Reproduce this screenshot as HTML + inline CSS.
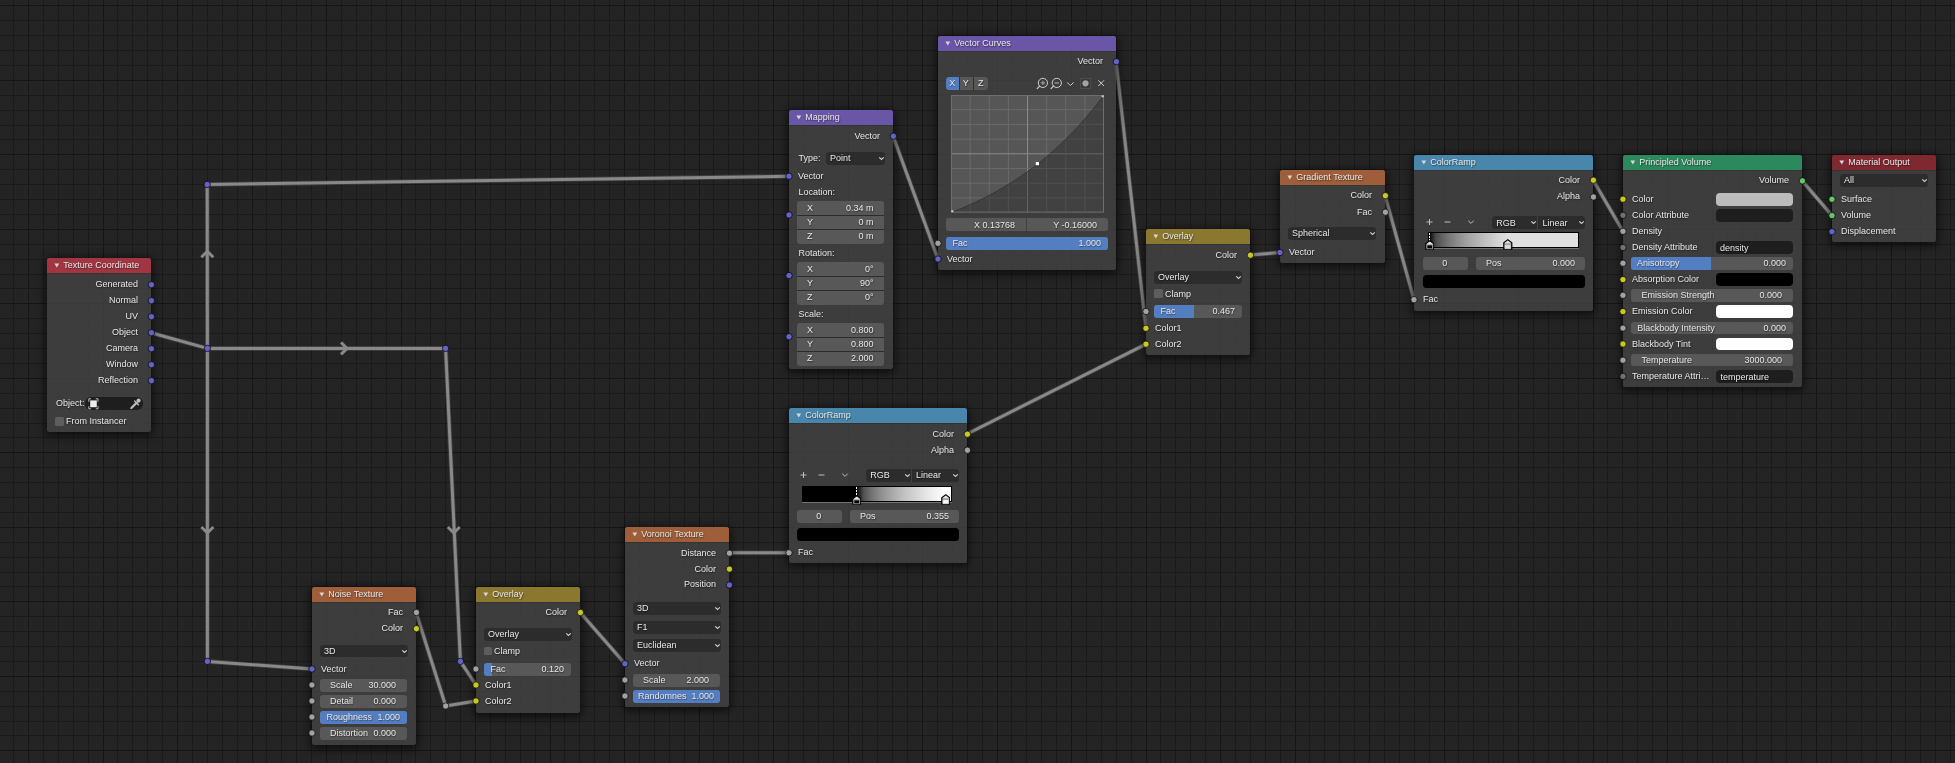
<!DOCTYPE html>
<html><head><meta charset="utf-8"><style>
html,body{margin:0;padding:0;}
body{width:1955px;height:763px;overflow:hidden;background:#242424;position:relative;font-family:"Liberation Sans", sans-serif;}
.r{position:absolute;}
#nodes{will-change:transform;}
.t{position:absolute;white-space:nowrap;line-height:10px;}
</style></head><body>
<svg class="r" style="left:0;top:0" width="1955" height="763"><rect x="-2" y="0" width="1" height="763" fill="#1a1a1a"/><rect x="13" y="0" width="1" height="763" fill="#1a1a1a"/><rect x="28" y="0" width="1" height="763" fill="#151515"/><rect x="43" y="0" width="1" height="763" fill="#1a1a1a"/><rect x="58" y="0" width="1" height="763" fill="#1a1a1a"/><rect x="73" y="0" width="1" height="763" fill="#1a1a1a"/><rect x="88" y="0" width="1" height="763" fill="#1a1a1a"/><rect x="103" y="0" width="1" height="763" fill="#151515"/><rect x="117" y="0" width="1" height="763" fill="#1a1a1a"/><rect x="132" y="0" width="1" height="763" fill="#1a1a1a"/><rect x="147" y="0" width="1" height="763" fill="#1a1a1a"/><rect x="162" y="0" width="1" height="763" fill="#1a1a1a"/><rect x="177" y="0" width="1" height="763" fill="#151515"/><rect x="192" y="0" width="1" height="763" fill="#1a1a1a"/><rect x="207" y="0" width="1" height="763" fill="#1a1a1a"/><rect x="222" y="0" width="1" height="763" fill="#1a1a1a"/><rect x="237" y="0" width="1" height="763" fill="#1a1a1a"/><rect x="252" y="0" width="1" height="763" fill="#151515"/><rect x="266" y="0" width="1" height="763" fill="#1a1a1a"/><rect x="281" y="0" width="1" height="763" fill="#1a1a1a"/><rect x="296" y="0" width="1" height="763" fill="#1a1a1a"/><rect x="311" y="0" width="1" height="763" fill="#1a1a1a"/><rect x="326" y="0" width="1" height="763" fill="#151515"/><rect x="341" y="0" width="1" height="763" fill="#1a1a1a"/><rect x="356" y="0" width="1" height="763" fill="#1a1a1a"/><rect x="371" y="0" width="1" height="763" fill="#1a1a1a"/><rect x="386" y="0" width="1" height="763" fill="#1a1a1a"/><rect x="401" y="0" width="1" height="763" fill="#151515"/><rect x="415" y="0" width="1" height="763" fill="#1a1a1a"/><rect x="430" y="0" width="1" height="763" fill="#1a1a1a"/><rect x="445" y="0" width="1" height="763" fill="#1a1a1a"/><rect x="460" y="0" width="1" height="763" fill="#1a1a1a"/><rect x="475" y="0" width="1" height="763" fill="#151515"/><rect x="490" y="0" width="1" height="763" fill="#1a1a1a"/><rect x="505" y="0" width="1" height="763" fill="#1a1a1a"/><rect x="520" y="0" width="1" height="763" fill="#1a1a1a"/><rect x="535" y="0" width="1" height="763" fill="#1a1a1a"/><rect x="550" y="0" width="1" height="763" fill="#151515"/><rect x="564" y="0" width="1" height="763" fill="#1a1a1a"/><rect x="579" y="0" width="1" height="763" fill="#1a1a1a"/><rect x="594" y="0" width="1" height="763" fill="#1a1a1a"/><rect x="609" y="0" width="1" height="763" fill="#1a1a1a"/><rect x="624" y="0" width="1" height="763" fill="#151515"/><rect x="639" y="0" width="1" height="763" fill="#1a1a1a"/><rect x="654" y="0" width="1" height="763" fill="#1a1a1a"/><rect x="669" y="0" width="1" height="763" fill="#1a1a1a"/><rect x="684" y="0" width="1" height="763" fill="#1a1a1a"/><rect x="699" y="0" width="1" height="763" fill="#151515"/><rect x="713" y="0" width="1" height="763" fill="#1a1a1a"/><rect x="728" y="0" width="1" height="763" fill="#1a1a1a"/><rect x="743" y="0" width="1" height="763" fill="#1a1a1a"/><rect x="758" y="0" width="1" height="763" fill="#1a1a1a"/><rect x="773" y="0" width="1" height="763" fill="#151515"/><rect x="788" y="0" width="1" height="763" fill="#1a1a1a"/><rect x="803" y="0" width="1" height="763" fill="#1a1a1a"/><rect x="818" y="0" width="1" height="763" fill="#1a1a1a"/><rect x="833" y="0" width="1" height="763" fill="#1a1a1a"/><rect x="848" y="0" width="1" height="763" fill="#151515"/><rect x="862" y="0" width="1" height="763" fill="#1a1a1a"/><rect x="877" y="0" width="1" height="763" fill="#1a1a1a"/><rect x="892" y="0" width="1" height="763" fill="#1a1a1a"/><rect x="907" y="0" width="1" height="763" fill="#1a1a1a"/><rect x="922" y="0" width="1" height="763" fill="#151515"/><rect x="937" y="0" width="1" height="763" fill="#1a1a1a"/><rect x="952" y="0" width="1" height="763" fill="#1a1a1a"/><rect x="967" y="0" width="1" height="763" fill="#1a1a1a"/><rect x="982" y="0" width="1" height="763" fill="#1a1a1a"/><rect x="997" y="0" width="1" height="763" fill="#151515"/><rect x="1011" y="0" width="1" height="763" fill="#1a1a1a"/><rect x="1026" y="0" width="1" height="763" fill="#1a1a1a"/><rect x="1041" y="0" width="1" height="763" fill="#1a1a1a"/><rect x="1056" y="0" width="1" height="763" fill="#1a1a1a"/><rect x="1071" y="0" width="1" height="763" fill="#151515"/><rect x="1086" y="0" width="1" height="763" fill="#1a1a1a"/><rect x="1101" y="0" width="1" height="763" fill="#1a1a1a"/><rect x="1116" y="0" width="1" height="763" fill="#1a1a1a"/><rect x="1131" y="0" width="1" height="763" fill="#1a1a1a"/><rect x="1146" y="0" width="1" height="763" fill="#151515"/><rect x="1160" y="0" width="1" height="763" fill="#1a1a1a"/><rect x="1175" y="0" width="1" height="763" fill="#1a1a1a"/><rect x="1190" y="0" width="1" height="763" fill="#1a1a1a"/><rect x="1205" y="0" width="1" height="763" fill="#1a1a1a"/><rect x="1220" y="0" width="1" height="763" fill="#151515"/><rect x="1235" y="0" width="1" height="763" fill="#1a1a1a"/><rect x="1250" y="0" width="1" height="763" fill="#1a1a1a"/><rect x="1265" y="0" width="1" height="763" fill="#1a1a1a"/><rect x="1280" y="0" width="1" height="763" fill="#1a1a1a"/><rect x="1295" y="0" width="1" height="763" fill="#151515"/><rect x="1309" y="0" width="1" height="763" fill="#1a1a1a"/><rect x="1324" y="0" width="1" height="763" fill="#1a1a1a"/><rect x="1339" y="0" width="1" height="763" fill="#1a1a1a"/><rect x="1354" y="0" width="1" height="763" fill="#1a1a1a"/><rect x="1369" y="0" width="1" height="763" fill="#151515"/><rect x="1384" y="0" width="1" height="763" fill="#1a1a1a"/><rect x="1399" y="0" width="1" height="763" fill="#1a1a1a"/><rect x="1414" y="0" width="1" height="763" fill="#1a1a1a"/><rect x="1429" y="0" width="1" height="763" fill="#1a1a1a"/><rect x="1444" y="0" width="1" height="763" fill="#151515"/><rect x="1458" y="0" width="1" height="763" fill="#1a1a1a"/><rect x="1473" y="0" width="1" height="763" fill="#1a1a1a"/><rect x="1488" y="0" width="1" height="763" fill="#1a1a1a"/><rect x="1503" y="0" width="1" height="763" fill="#1a1a1a"/><rect x="1518" y="0" width="1" height="763" fill="#151515"/><rect x="1533" y="0" width="1" height="763" fill="#1a1a1a"/><rect x="1548" y="0" width="1" height="763" fill="#1a1a1a"/><rect x="1563" y="0" width="1" height="763" fill="#1a1a1a"/><rect x="1578" y="0" width="1" height="763" fill="#1a1a1a"/><rect x="1593" y="0" width="1" height="763" fill="#151515"/><rect x="1607" y="0" width="1" height="763" fill="#1a1a1a"/><rect x="1622" y="0" width="1" height="763" fill="#1a1a1a"/><rect x="1637" y="0" width="1" height="763" fill="#1a1a1a"/><rect x="1652" y="0" width="1" height="763" fill="#1a1a1a"/><rect x="1667" y="0" width="1" height="763" fill="#151515"/><rect x="1682" y="0" width="1" height="763" fill="#1a1a1a"/><rect x="1697" y="0" width="1" height="763" fill="#1a1a1a"/><rect x="1712" y="0" width="1" height="763" fill="#1a1a1a"/><rect x="1727" y="0" width="1" height="763" fill="#1a1a1a"/><rect x="1742" y="0" width="1" height="763" fill="#151515"/><rect x="1756" y="0" width="1" height="763" fill="#1a1a1a"/><rect x="1771" y="0" width="1" height="763" fill="#1a1a1a"/><rect x="1786" y="0" width="1" height="763" fill="#1a1a1a"/><rect x="1801" y="0" width="1" height="763" fill="#1a1a1a"/><rect x="1816" y="0" width="1" height="763" fill="#151515"/><rect x="1831" y="0" width="1" height="763" fill="#1a1a1a"/><rect x="1846" y="0" width="1" height="763" fill="#1a1a1a"/><rect x="1861" y="0" width="1" height="763" fill="#1a1a1a"/><rect x="1876" y="0" width="1" height="763" fill="#1a1a1a"/><rect x="1891" y="0" width="1" height="763" fill="#151515"/><rect x="1905" y="0" width="1" height="763" fill="#1a1a1a"/><rect x="1920" y="0" width="1" height="763" fill="#1a1a1a"/><rect x="1935" y="0" width="1" height="763" fill="#1a1a1a"/><rect x="1950" y="0" width="1" height="763" fill="#1a1a1a"/><rect x="0" y="-24" width="1955" height="1" fill="#1a1a1a"/><rect x="0" y="-10" width="1955" height="1" fill="#1a1a1a"/><rect x="0" y="5" width="1955" height="1" fill="#151515"/><rect x="0" y="20" width="1955" height="1" fill="#1a1a1a"/><rect x="0" y="35" width="1955" height="1" fill="#1a1a1a"/><rect x="0" y="50" width="1955" height="1" fill="#1a1a1a"/><rect x="0" y="65" width="1955" height="1" fill="#1a1a1a"/><rect x="0" y="80" width="1955" height="1" fill="#151515"/><rect x="0" y="95" width="1955" height="1" fill="#1a1a1a"/><rect x="0" y="110" width="1955" height="1" fill="#1a1a1a"/><rect x="0" y="125" width="1955" height="1" fill="#1a1a1a"/><rect x="0" y="139" width="1955" height="1" fill="#1a1a1a"/><rect x="0" y="154" width="1955" height="1" fill="#151515"/><rect x="0" y="169" width="1955" height="1" fill="#1a1a1a"/><rect x="0" y="184" width="1955" height="1" fill="#1a1a1a"/><rect x="0" y="199" width="1955" height="1" fill="#1a1a1a"/><rect x="0" y="214" width="1955" height="1" fill="#1a1a1a"/><rect x="0" y="229" width="1955" height="1" fill="#151515"/><rect x="0" y="244" width="1955" height="1" fill="#1a1a1a"/><rect x="0" y="259" width="1955" height="1" fill="#1a1a1a"/><rect x="0" y="274" width="1955" height="1" fill="#1a1a1a"/><rect x="0" y="288" width="1955" height="1" fill="#1a1a1a"/><rect x="0" y="303" width="1955" height="1" fill="#151515"/><rect x="0" y="318" width="1955" height="1" fill="#1a1a1a"/><rect x="0" y="333" width="1955" height="1" fill="#1a1a1a"/><rect x="0" y="348" width="1955" height="1" fill="#1a1a1a"/><rect x="0" y="363" width="1955" height="1" fill="#1a1a1a"/><rect x="0" y="378" width="1955" height="1" fill="#151515"/><rect x="0" y="393" width="1955" height="1" fill="#1a1a1a"/><rect x="0" y="408" width="1955" height="1" fill="#1a1a1a"/><rect x="0" y="423" width="1955" height="1" fill="#1a1a1a"/><rect x="0" y="437" width="1955" height="1" fill="#1a1a1a"/><rect x="0" y="452" width="1955" height="1" fill="#151515"/><rect x="0" y="467" width="1955" height="1" fill="#1a1a1a"/><rect x="0" y="482" width="1955" height="1" fill="#1a1a1a"/><rect x="0" y="497" width="1955" height="1" fill="#1a1a1a"/><rect x="0" y="512" width="1955" height="1" fill="#1a1a1a"/><rect x="0" y="527" width="1955" height="1" fill="#151515"/><rect x="0" y="542" width="1955" height="1" fill="#1a1a1a"/><rect x="0" y="557" width="1955" height="1" fill="#1a1a1a"/><rect x="0" y="572" width="1955" height="1" fill="#1a1a1a"/><rect x="0" y="586" width="1955" height="1" fill="#1a1a1a"/><rect x="0" y="601" width="1955" height="1" fill="#151515"/><rect x="0" y="616" width="1955" height="1" fill="#1a1a1a"/><rect x="0" y="631" width="1955" height="1" fill="#1a1a1a"/><rect x="0" y="646" width="1955" height="1" fill="#1a1a1a"/><rect x="0" y="661" width="1955" height="1" fill="#1a1a1a"/><rect x="0" y="676" width="1955" height="1" fill="#151515"/><rect x="0" y="691" width="1955" height="1" fill="#1a1a1a"/><rect x="0" y="706" width="1955" height="1" fill="#1a1a1a"/><rect x="0" y="721" width="1955" height="1" fill="#1a1a1a"/><rect x="0" y="735" width="1955" height="1" fill="#1a1a1a"/><rect x="0" y="750" width="1955" height="1" fill="#151515"/></svg>
<svg class="r" style="left:0;top:0" width="1955" height="763"><path d="M151,332.8 L207.4,348.4" stroke="rgba(120,120,120,0.35)" stroke-width="4.6" fill="none" stroke-linejoin="round"/><path d="M151,332.8 L207.4,348.4" stroke="#898989" stroke-width="3.0" fill="none" stroke-linejoin="round"/><path d="M207.4,348.4 L207.2,184.5" stroke="rgba(120,120,120,0.35)" stroke-width="4.6" fill="none" stroke-linejoin="round"/><path d="M207.4,348.4 L207.2,184.5" stroke="#898989" stroke-width="3.0" fill="none" stroke-linejoin="round"/><path d="M207.2,184.5 L789,176.3" stroke="rgba(120,120,120,0.35)" stroke-width="4.6" fill="none" stroke-linejoin="round"/><path d="M207.2,184.5 L789,176.3" stroke="#898989" stroke-width="3.0" fill="none" stroke-linejoin="round"/><path d="M207.4,348.4 L445.6,348.4" stroke="rgba(120,120,120,0.35)" stroke-width="4.6" fill="none" stroke-linejoin="round"/><path d="M207.4,348.4 L445.6,348.4" stroke="#898989" stroke-width="3.0" fill="none" stroke-linejoin="round"/><path d="M207.4,348.4 L207.4,661.4" stroke="rgba(120,120,120,0.35)" stroke-width="4.6" fill="none" stroke-linejoin="round"/><path d="M207.4,348.4 L207.4,661.4" stroke="#898989" stroke-width="3.0" fill="none" stroke-linejoin="round"/><path d="M207.4,661.4 L312,669" stroke="rgba(120,120,120,0.35)" stroke-width="4.6" fill="none" stroke-linejoin="round"/><path d="M207.4,661.4 L312,669" stroke="#898989" stroke-width="3.0" fill="none" stroke-linejoin="round"/><path d="M445.6,348.4 L460.4,661.4" stroke="rgba(120,120,120,0.35)" stroke-width="4.6" fill="none" stroke-linejoin="round"/><path d="M445.6,348.4 L460.4,661.4" stroke="#898989" stroke-width="3.0" fill="none" stroke-linejoin="round"/><path d="M460.4,661.4 L476,685" stroke="rgba(120,120,120,0.35)" stroke-width="4.6" fill="none" stroke-linejoin="round"/><path d="M460.4,661.4 L476,685" stroke="#898989" stroke-width="3.0" fill="none" stroke-linejoin="round"/><path d="M416,612.3 L445.7,706" stroke="rgba(120,120,120,0.35)" stroke-width="4.6" fill="none" stroke-linejoin="round"/><path d="M416,612.3 L445.7,706" stroke="#898989" stroke-width="3.0" fill="none" stroke-linejoin="round"/><path d="M445.7,706 L476,701" stroke="rgba(120,120,120,0.35)" stroke-width="4.6" fill="none" stroke-linejoin="round"/><path d="M445.7,706 L476,701" stroke="#898989" stroke-width="3.0" fill="none" stroke-linejoin="round"/><path d="M580,612.3 L625,663.7" stroke="rgba(120,120,120,0.35)" stroke-width="4.6" fill="none" stroke-linejoin="round"/><path d="M580,612.3 L625,663.7" stroke="#898989" stroke-width="3.0" fill="none" stroke-linejoin="round"/><path d="M729,552.7 L789,552.8" stroke="rgba(120,120,120,0.35)" stroke-width="4.6" fill="none" stroke-linejoin="round"/><path d="M729,552.7 L789,552.8" stroke="#898989" stroke-width="3.0" fill="none" stroke-linejoin="round"/><path d="M967,434 L1146,344.2" stroke="rgba(120,120,120,0.35)" stroke-width="4.6" fill="none" stroke-linejoin="round"/><path d="M967,434 L1146,344.2" stroke="#898989" stroke-width="3.0" fill="none" stroke-linejoin="round"/><path d="M893,136 L938,259" stroke="rgba(120,120,120,0.35)" stroke-width="4.6" fill="none" stroke-linejoin="round"/><path d="M893,136 L938,259" stroke="#898989" stroke-width="3.0" fill="none" stroke-linejoin="round"/><path d="M1116,61.5 L1146,328.3" stroke="rgba(120,120,120,0.35)" stroke-width="4.6" fill="none" stroke-linejoin="round"/><path d="M1116,61.5 L1146,328.3" stroke="#898989" stroke-width="3.0" fill="none" stroke-linejoin="round"/><path d="M1250,255 L1280,252.5" stroke="rgba(120,120,120,0.35)" stroke-width="4.6" fill="none" stroke-linejoin="round"/><path d="M1250,255 L1280,252.5" stroke="#898989" stroke-width="3.0" fill="none" stroke-linejoin="round"/><path d="M1385,195.5 L1414,299.7" stroke="rgba(120,120,120,0.35)" stroke-width="4.6" fill="none" stroke-linejoin="round"/><path d="M1385,195.5 L1414,299.7" stroke="#898989" stroke-width="3.0" fill="none" stroke-linejoin="round"/><path d="M1593,180 L1623,231.3" stroke="rgba(120,120,120,0.35)" stroke-width="4.6" fill="none" stroke-linejoin="round"/><path d="M1593,180 L1623,231.3" stroke="#898989" stroke-width="3.0" fill="none" stroke-linejoin="round"/><path d="M1802,180.7 L1832,215.6" stroke="rgba(120,120,120,0.35)" stroke-width="4.6" fill="none" stroke-linejoin="round"/><path d="M1802,180.7 L1832,215.6" stroke="#898989" stroke-width="3.0" fill="none" stroke-linejoin="round"/><g transform="translate(207.3,252.3) rotate(0)"><path d="M-6 5 L0 -1 L6 5" stroke="#898989" stroke-width="3" fill="none"/></g><g transform="translate(346,348.4) rotate(90)"><path d="M-6 5 L0 -1 L6 5" stroke="#898989" stroke-width="3" fill="none"/></g><g transform="translate(207.4,532) rotate(180)"><path d="M-6 5 L0 -1 L6 5" stroke="#898989" stroke-width="3" fill="none"/></g><g transform="translate(453.8,532) rotate(180)"><path d="M-6 5 L0 -1 L6 5" stroke="#898989" stroke-width="3" fill="none"/></g></svg>
<div id="nodes" class="r" style="left:0;top:0;width:1955px;height:763px">
<div class="r" style="left:47px;top:258px;width:104px;height:174px;border-radius:2.5px;background:rgba(70,70,70,0.76);box-shadow:0 2px 9px 2px rgba(0,0,0,0.6);"></div><div class="r" style="left:47px;top:258px;width:104px;height:14.8px;border-radius:2.5px 2.5px 0 0;background:rgba(170,54,68,0.93);"></div><div class="r" style="left:47px;top:272.8px;width:104px;height:1px;background:rgba(0,0,0,0.12);"></div><svg class="r" style="left:54.2px;top:263.3px" width="6" height="6"><path d="M0.4 0.6 L5.2 0.6 L2.8 4.6 Z" fill="#d6d6d6"/></svg><div class="t" style="left:63.3px;top:260.00px;font-size:9px;color:#e8e8e8;text-shadow:0.6px 0.9px 1.2px rgba(0,0,0,0.5);">Texture Coordinate</div><div class="t" style="right:1817px;top:279.00px;font-size:9px;color:#e8e8e8;text-shadow:0.6px 0.9px 1.2px rgba(0,0,0,0.5);">Generated</div><div class="t" style="right:1817px;top:295.00px;font-size:9px;color:#e8e8e8;text-shadow:0.6px 0.9px 1.2px rgba(0,0,0,0.5);">Normal</div><div class="t" style="right:1817px;top:311.00px;font-size:9px;color:#e8e8e8;text-shadow:0.6px 0.9px 1.2px rgba(0,0,0,0.5);">UV</div><div class="t" style="right:1817px;top:327.00px;font-size:9px;color:#e8e8e8;text-shadow:0.6px 0.9px 1.2px rgba(0,0,0,0.5);">Object</div><div class="t" style="right:1817px;top:343.00px;font-size:9px;color:#e8e8e8;text-shadow:0.6px 0.9px 1.2px rgba(0,0,0,0.5);">Camera</div><div class="t" style="right:1817px;top:359.00px;font-size:9px;color:#e8e8e8;text-shadow:0.6px 0.9px 1.2px rgba(0,0,0,0.5);">Window</div><div class="t" style="right:1817px;top:375.00px;font-size:9px;color:#e8e8e8;text-shadow:0.6px 0.9px 1.2px rgba(0,0,0,0.5);">Reflection</div><div class="t" style="left:56px;top:398.00px;font-size:9px;color:#e8e8e8;text-shadow:0.6px 0.9px 1.2px rgba(0,0,0,0.5);">Object:</div><div class="r" style="left:85px;top:397px;width:58px;height:13px;background:#1e1e1e;border-radius:6px;"></div><svg class="r" style="left:88px;top:398px" width="56" height="13"><path d="M0.8 3.8 V0.8 H3 M7.8 0.8 H10 V3.8 M10 8.2 V10.8 H7.8 M3 10.8 H0.8 V8.2" stroke="#c8c8c8" stroke-width="0.9" fill="none"/><rect x="2.2" y="2.4" width="6.6" height="6.8" fill="#ececec"/><path d="M43.6 9.8 L48.6 4.8" stroke="#bcbcbc" stroke-width="2.3" stroke-linecap="round"/><path d="M42.8 10.6 L44.4 9" stroke="#bcbcbc" stroke-width="1" stroke-linecap="round"/><path d="M46.6 2.9 L50.4 6.7" stroke="#bcbcbc" stroke-width="1.4" stroke-linecap="round"/><circle cx="50.6" cy="2.6" r="2.1" fill="#bcbcbc"/></svg><div class="r" style="left:55px;top:417px;width:9px;height:9px;background:#5d5d5d;border-radius:1.5px;"></div><div class="t" style="left:66px;top:416.00px;font-size:9px;color:#e8e8e8;text-shadow:0.6px 0.9px 1.2px rgba(0,0,0,0.5);">From Instancer</div><div class="r" style="left:312px;top:587px;width:104px;height:158px;border-radius:2.5px;background:rgba(70,70,70,0.76);box-shadow:0 2px 9px 2px rgba(0,0,0,0.6);"></div><div class="r" style="left:312px;top:587px;width:104px;height:14.8px;border-radius:2.5px 2.5px 0 0;background:rgba(166,98,58,0.93);"></div><div class="r" style="left:312px;top:601.8px;width:104px;height:1px;background:rgba(0,0,0,0.12);"></div><svg class="r" style="left:319.2px;top:592.3px" width="6" height="6"><path d="M0.4 0.6 L5.2 0.6 L2.8 4.6 Z" fill="#d6d6d6"/></svg><div class="t" style="left:328.3px;top:589.00px;font-size:9px;color:#e8e8e8;text-shadow:0.6px 0.9px 1.2px rgba(0,0,0,0.5);">Noise Texture</div><div class="t" style="right:1552px;top:607.00px;font-size:9px;color:#e8e8e8;text-shadow:0.6px 0.9px 1.2px rgba(0,0,0,0.5);">Fac</div><div class="t" style="right:1552px;top:623.00px;font-size:9px;color:#e8e8e8;text-shadow:0.6px 0.9px 1.2px rgba(0,0,0,0.5);">Color</div><div class="r" style="left:320px;top:645px;width:88px;height:12px;background:#2c2c2c;border-radius:3.5px;"></div><div class="t" style="left:324px;top:646.00px;font-size:9px;color:#e8e8e8;text-shadow:0.6px 0.9px 1.2px rgba(0,0,0,0.5);">3D</div><svg class="r" style="left:400.5px;top:648.8px" width="7" height="5"><path d="M1.2 1.3 L3.5 3.5 L5.8 1.3" stroke="#d0d0d0" stroke-width="1.1" fill="none"/></svg><div class="t" style="left:321px;top:664.00px;font-size:9px;color:#e8e8e8;text-shadow:0.6px 0.9px 1.2px rgba(0,0,0,0.5);">Vector</div><div class="r" style="left:320px;top:678.5px;width:87px;height:13px;background:#585858;border-radius:3px;"></div><div class="t" style="left:330px;top:680.00px;font-size:9px;color:#e8e8e8;text-shadow:0.6px 0.9px 1.2px rgba(0,0,0,0.5);">Scale</div><div class="t" style="right:1559px;top:680.00px;font-size:9px;color:#e8e8e8;text-shadow:0.6px 0.9px 1.2px rgba(0,0,0,0.5);">30.000</div><div class="r" style="left:320px;top:694.5px;width:87px;height:13px;background:#585858;border-radius:3px;"></div><div class="t" style="left:330px;top:696.00px;font-size:9px;color:#e8e8e8;text-shadow:0.6px 0.9px 1.2px rgba(0,0,0,0.5);">Detail</div><div class="t" style="right:1559px;top:696.00px;font-size:9px;color:#e8e8e8;text-shadow:0.6px 0.9px 1.2px rgba(0,0,0,0.5);">0.000</div><div class="r" style="left:320px;top:710.5px;width:87px;height:13px;background:#585858;border-radius:3px;"></div><div class="r" style="left:320px;top:710.5px;width:87.00px;height:13px;background:#547ec2;border-radius:3px;"></div><div class="t" style="left:326.5px;top:712.00px;font-size:9px;color:#e8e8e8;text-shadow:0.6px 0.9px 1.2px rgba(0,0,0,0.5);">Roughness</div><div class="t" style="right:1555px;top:712.00px;font-size:9px;color:#e8e8e8;text-shadow:0.6px 0.9px 1.2px rgba(0,0,0,0.5);">1.000</div><div class="r" style="left:320px;top:726.5px;width:87px;height:13px;background:#585858;border-radius:3px;"></div><div class="t" style="left:330px;top:728.00px;font-size:9px;color:#e8e8e8;text-shadow:0.6px 0.9px 1.2px rgba(0,0,0,0.5);">Distortion</div><div class="t" style="right:1559px;top:728.00px;font-size:9px;color:#e8e8e8;text-shadow:0.6px 0.9px 1.2px rgba(0,0,0,0.5);">0.000</div><div class="r" style="left:476px;top:587px;width:104px;height:126px;border-radius:2.5px;background:rgba(70,70,70,0.76);box-shadow:0 2px 9px 2px rgba(0,0,0,0.6);"></div><div class="r" style="left:476px;top:587px;width:104px;height:14.8px;border-radius:2.5px 2.5px 0 0;background:rgba(145,126,46,0.93);"></div><div class="r" style="left:476px;top:601.8px;width:104px;height:1px;background:rgba(0,0,0,0.12);"></div><svg class="r" style="left:483.2px;top:592.3px" width="6" height="6"><path d="M0.4 0.6 L5.2 0.6 L2.8 4.6 Z" fill="#d6d6d6"/></svg><div class="t" style="left:492.3px;top:589.00px;font-size:9px;color:#e8e8e8;text-shadow:0.6px 0.9px 1.2px rgba(0,0,0,0.5);">Overlay</div><div class="t" style="right:1388px;top:607.00px;font-size:9px;color:#e8e8e8;text-shadow:0.6px 0.9px 1.2px rgba(0,0,0,0.5);">Color</div><div class="r" style="left:484px;top:628px;width:88px;height:12.5px;background:#2c2c2c;border-radius:3.5px;"></div><div class="t" style="left:488px;top:629.00px;font-size:9px;color:#e8e8e8;text-shadow:0.6px 0.9px 1.2px rgba(0,0,0,0.5);">Overlay</div><svg class="r" style="left:564.5px;top:632.05px" width="7" height="5"><path d="M1.2 1.3 L3.5 3.5 L5.8 1.3" stroke="#d0d0d0" stroke-width="1.1" fill="none"/></svg><div class="r" style="left:484px;top:647px;width:8px;height:8px;background:#5d5d5d;border-radius:1.5px;"></div><div class="t" style="left:494px;top:646.00px;font-size:9px;color:#e8e8e8;text-shadow:0.6px 0.9px 1.2px rgba(0,0,0,0.5);">Clamp</div><div class="r" style="left:484px;top:663px;width:87px;height:13px;background:#585858;border-radius:3px;"></div><div class="r" style="left:484px;top:663px;width:7.83px;height:13px;background:#547ec2;border-radius:3px 0 0 3px;"></div><div class="t" style="left:490.5px;top:664.00px;font-size:9px;color:#e8e8e8;text-shadow:0.6px 0.9px 1.2px rgba(0,0,0,0.5);">Fac</div><div class="t" style="right:1391px;top:664.00px;font-size:9px;color:#e8e8e8;text-shadow:0.6px 0.9px 1.2px rgba(0,0,0,0.5);">0.120</div><div class="t" style="left:485px;top:680.00px;font-size:9px;color:#e8e8e8;text-shadow:0.6px 0.9px 1.2px rgba(0,0,0,0.5);">Color1</div><div class="t" style="left:485px;top:696.00px;font-size:9px;color:#e8e8e8;text-shadow:0.6px 0.9px 1.2px rgba(0,0,0,0.5);">Color2</div><div class="r" style="left:625px;top:527px;width:104px;height:179.5px;border-radius:2.5px;background:rgba(70,70,70,0.76);box-shadow:0 2px 9px 2px rgba(0,0,0,0.6);"></div><div class="r" style="left:625px;top:527px;width:104px;height:14.8px;border-radius:2.5px 2.5px 0 0;background:rgba(166,98,58,0.93);"></div><div class="r" style="left:625px;top:541.8px;width:104px;height:1px;background:rgba(0,0,0,0.12);"></div><svg class="r" style="left:632.2px;top:532.3px" width="6" height="6"><path d="M0.4 0.6 L5.2 0.6 L2.8 4.6 Z" fill="#d6d6d6"/></svg><div class="t" style="left:641.3px;top:529.00px;font-size:9px;color:#e8e8e8;text-shadow:0.6px 0.9px 1.2px rgba(0,0,0,0.5);">Voronoi Texture</div><div class="t" style="right:1239px;top:548.00px;font-size:9px;color:#e8e8e8;text-shadow:0.6px 0.9px 1.2px rgba(0,0,0,0.5);">Distance</div><div class="t" style="right:1239px;top:564.00px;font-size:9px;color:#e8e8e8;text-shadow:0.6px 0.9px 1.2px rgba(0,0,0,0.5);">Color</div><div class="t" style="right:1239px;top:579.00px;font-size:9px;color:#e8e8e8;text-shadow:0.6px 0.9px 1.2px rgba(0,0,0,0.5);">Position</div><div class="r" style="left:633px;top:602px;width:88px;height:12.5px;background:#2c2c2c;border-radius:3.5px;"></div><div class="t" style="left:637px;top:603.00px;font-size:9px;color:#e8e8e8;text-shadow:0.6px 0.9px 1.2px rgba(0,0,0,0.5);">3D</div><svg class="r" style="left:713.5px;top:606.05px" width="7" height="5"><path d="M1.2 1.3 L3.5 3.5 L5.8 1.3" stroke="#d0d0d0" stroke-width="1.1" fill="none"/></svg><div class="r" style="left:633px;top:621px;width:88px;height:12.5px;background:#2c2c2c;border-radius:3.5px;"></div><div class="t" style="left:637px;top:622.00px;font-size:9px;color:#e8e8e8;text-shadow:0.6px 0.9px 1.2px rgba(0,0,0,0.5);">F1</div><svg class="r" style="left:713.5px;top:625.05px" width="7" height="5"><path d="M1.2 1.3 L3.5 3.5 L5.8 1.3" stroke="#d0d0d0" stroke-width="1.1" fill="none"/></svg><div class="r" style="left:633px;top:639px;width:88px;height:12.5px;background:#2c2c2c;border-radius:3.5px;"></div><div class="t" style="left:637px;top:640.00px;font-size:9px;color:#e8e8e8;text-shadow:0.6px 0.9px 1.2px rgba(0,0,0,0.5);">Euclidean</div><svg class="r" style="left:713.5px;top:643.05px" width="7" height="5"><path d="M1.2 1.3 L3.5 3.5 L5.8 1.3" stroke="#d0d0d0" stroke-width="1.1" fill="none"/></svg><div class="t" style="left:634px;top:658.00px;font-size:9px;color:#e8e8e8;text-shadow:0.6px 0.9px 1.2px rgba(0,0,0,0.5);">Vector</div><div class="r" style="left:633px;top:674px;width:87px;height:13px;background:#585858;border-radius:3px;"></div><div class="t" style="left:643px;top:675.00px;font-size:9px;color:#e8e8e8;text-shadow:0.6px 0.9px 1.2px rgba(0,0,0,0.5);">Scale</div><div class="t" style="right:1246px;top:675.00px;font-size:9px;color:#e8e8e8;text-shadow:0.6px 0.9px 1.2px rgba(0,0,0,0.5);">2.000</div><div class="r" style="left:633px;top:690px;width:87px;height:13px;background:#585858;border-radius:3px;"></div><div class="r" style="left:633px;top:690px;width:87.00px;height:13px;background:#547ec2;border-radius:3px;"></div><div class="t" style="left:638px;top:691.00px;font-size:9px;color:#e8e8e8;text-shadow:0.6px 0.9px 1.2px rgba(0,0,0,0.5);">Randomnes</div><div class="t" style="right:1241px;top:691.00px;font-size:9px;color:#e8e8e8;text-shadow:0.6px 0.9px 1.2px rgba(0,0,0,0.5);">1.000</div><div class="r" style="left:789px;top:408px;width:178px;height:155px;border-radius:2.5px;background:rgba(70,70,70,0.76);box-shadow:0 2px 9px 2px rgba(0,0,0,0.6);"></div><div class="r" style="left:789px;top:408px;width:178px;height:14.8px;border-radius:2.5px 2.5px 0 0;background:rgba(74,141,181,0.93);"></div><div class="r" style="left:789px;top:422.8px;width:178px;height:1px;background:rgba(0,0,0,0.12);"></div><svg class="r" style="left:796.2px;top:413.3px" width="6" height="6"><path d="M0.4 0.6 L5.2 0.6 L2.8 4.6 Z" fill="#d6d6d6"/></svg><div class="t" style="left:805.3px;top:410.00px;font-size:9px;color:#e8e8e8;text-shadow:0.6px 0.9px 1.2px rgba(0,0,0,0.5);">ColorRamp</div><div class="t" style="right:1001px;top:429.00px;font-size:9px;color:#e8e8e8;text-shadow:0.6px 0.9px 1.2px rgba(0,0,0,0.5);">Color</div><div class="t" style="right:1001px;top:445.00px;font-size:9px;color:#e8e8e8;text-shadow:0.6px 0.9px 1.2px rgba(0,0,0,0.5);">Alpha</div><svg class="r" style="left:799px;top:470.3px" width="60" height="10"><path d="M4.5 2 V8 M1.5 5 H7.5" stroke="#bdbdbd" stroke-width="1"/><path d="M19.5 5 H25.5" stroke="#bdbdbd" stroke-width="1"/><path d="M43.2 3.6 L46 6.4 L48.8 3.6" stroke="#bdbdbd" stroke-width="1" fill="none"/></svg><div class="r" style="left:866px;top:469px;width:93px;height:12.6px;background:#2c2c2c;border-radius:3.5px;"></div><div class="r" style="left:911px;top:469px;width:1px;height:12.6px;background:rgba(70,70,70,0.9);border-radius:0px;"></div><div class="t" style="left:870.3px;top:470.00px;font-size:9px;color:#e8e8e8;text-shadow:0.6px 0.9px 1.2px rgba(0,0,0,0.5);">RGB</div><svg class="r" style="left:903.7px;top:473.0px" width="7" height="5"><path d="M1.2 1.3 L3.5 3.5 L5.8 1.3" stroke="#d0d0d0" stroke-width="1.1" fill="none"/></svg><div class="t" style="left:916px;top:470.00px;font-size:9px;color:#e8e8e8;text-shadow:0.6px 0.9px 1.2px rgba(0,0,0,0.5);">Linear</div><svg class="r" style="left:951.7px;top:473.0px" width="7" height="5"><path d="M1.2 1.3 L3.5 3.5 L5.8 1.3" stroke="#d0d0d0" stroke-width="1.1" fill="none"/></svg><div class="r" style="left:802px;top:486px;width:150.4px;height:15.8px;background:#000;"></div><div class="r" style="left:803px;top:487px;width:148.4px;height:14.0px;background:linear-gradient(to right,rgb(0,0,0) 0%,rgb(0,0,0) 36.00%,rgb(82,82,82) 41.00%,rgb(113,113,113) 46.00%,rgb(136,136,136) 51.00%,rgb(155,155,155) 56.00%,rgb(171,171,171) 61.00%,rgb(186,186,186) 66.00%,rgb(200,200,200) 71.00%,rgb(212,212,212) 76.00%,rgb(224,224,224) 81.00%,rgb(235,235,235) 86.00%,rgb(245,245,245) 91.00%,rgb(255,255,255) 96.00%,rgb(255,255,255) 100%);"></div><div class="r" style="left:802px;top:501.8px;width:150.4px;height:0.8px;background:rgba(150,150,150,0.6);"></div><div class="r" style="left:855.82px;top:487px;width:1.2px;height:7.58px;background:repeating-linear-gradient(to bottom,#fff 0 1.8px,#000 1.8px 3px);"></div><svg class="r" style="left:851.62px;top:494.60px" width="9.6" height="10.00" viewBox="0 0 9.6 10.00"><path d="M0.8 9.20 V3.9 L4.8 0.8 L8.8 3.9 V9.20 Z" fill="#9a9a9a" stroke="#000" stroke-width="1.2" stroke-linejoin="miter"/><path d="M1.4 4.2 L4.8 1.5 L8.2 4.2 Z" fill="#e4e4e4"/><rect x="2" y="5.00" width="5.6" height="3.8" fill="#000" stroke="#c8c8c8" stroke-width="0.6"/></svg><svg class="r" style="left:940.66px;top:493.60px" width="9.6" height="11.00" viewBox="0 0 9.6 11.00"><path d="M0.8 10.20 V3.9 L4.8 0.8 L8.8 3.9 V10.20 Z" fill="#9a9a9a" stroke="#000" stroke-width="1.2" stroke-linejoin="miter"/><path d="M1.4 4.2 L4.8 1.5 L8.2 4.2 Z" fill="#e4e4e4"/><rect x="2" y="6.00" width="5.6" height="3.8" fill="#fff" stroke="#c8c8c8" stroke-width="0.6"/></svg><div class="r" style="left:797px;top:510px;width:45px;height:12.5px;background:#585858;border-radius:3px;"></div><div class="t" style="left:718.8px;width:200px;text-align:center;top:511.00px;font-size:9px;color:#e8e8e8;text-shadow:0.6px 0.9px 1.2px rgba(0,0,0,0.5);">0</div><div class="r" style="left:850px;top:510px;width:109px;height:12.5px;background:#585858;border-radius:3px;"></div><div class="t" style="left:860px;top:511.00px;font-size:9px;color:#e8e8e8;text-shadow:0.6px 0.9px 1.2px rgba(0,0,0,0.5);">Pos</div><div class="t" style="right:1006px;top:511.00px;font-size:9px;color:#e8e8e8;text-shadow:0.6px 0.9px 1.2px rgba(0,0,0,0.5);">0.355</div><div class="r" style="left:797px;top:528px;width:162px;height:13px;background:#000000;border-radius:3.5px;"></div><div class="t" style="left:798px;top:547.00px;font-size:9px;color:#e8e8e8;text-shadow:0.6px 0.9px 1.2px rgba(0,0,0,0.5);">Fac</div><div class="r" style="left:789px;top:110px;width:104px;height:259px;border-radius:2.5px;background:rgba(70,70,70,0.76);box-shadow:0 2px 9px 2px rgba(0,0,0,0.6);"></div><div class="r" style="left:789px;top:110px;width:104px;height:14.8px;border-radius:2.5px 2.5px 0 0;background:rgba(111,89,176,0.93);"></div><div class="r" style="left:789px;top:124.8px;width:104px;height:1px;background:rgba(0,0,0,0.12);"></div><svg class="r" style="left:796.2px;top:115.3px" width="6" height="6"><path d="M0.4 0.6 L5.2 0.6 L2.8 4.6 Z" fill="#d6d6d6"/></svg><div class="t" style="left:805.3px;top:112.00px;font-size:9px;color:#e8e8e8;text-shadow:0.6px 0.9px 1.2px rgba(0,0,0,0.5);">Mapping</div><div class="t" style="right:1075px;top:131.00px;font-size:9px;color:#e8e8e8;text-shadow:0.6px 0.9px 1.2px rgba(0,0,0,0.5);">Vector</div><div class="t" style="left:798.5px;top:153.00px;font-size:9px;color:#e8e8e8;text-shadow:0.6px 0.9px 1.2px rgba(0,0,0,0.5);">Type:</div><div class="r" style="left:826px;top:152.3px;width:59px;height:12.5px;background:#2c2c2c;border-radius:3.5px;"></div><div class="t" style="left:830px;top:153.00px;font-size:9px;color:#e8e8e8;text-shadow:0.6px 0.9px 1.2px rgba(0,0,0,0.5);">Point</div><svg class="r" style="left:877.5px;top:156.35000000000002px" width="7" height="5"><path d="M1.2 1.3 L3.5 3.5 L5.8 1.3" stroke="#d0d0d0" stroke-width="1.1" fill="none"/></svg><div class="t" style="left:798px;top:171.00px;font-size:9px;color:#e8e8e8;text-shadow:0.6px 0.9px 1.2px rgba(0,0,0,0.5);">Vector</div><div class="t" style="left:798.5px;top:187.00px;font-size:9px;color:#e8e8e8;text-shadow:0.6px 0.9px 1.2px rgba(0,0,0,0.5);">Location:</div><div class="r" style="left:797px;top:201px;width:87px;height:42.5px;background:#585858;border-radius:3px;"></div><div class="r" style="left:797px;top:214.66666666666666px;width:87px;height:1px;background:rgba(40,40,40,0.9);border-radius:0px;"></div><div class="r" style="left:797px;top:228.83333333333334px;width:87px;height:1px;background:rgba(40,40,40,0.9);border-radius:0px;"></div><div class="t" style="left:807px;top:203.00px;font-size:9px;color:#e8e8e8;text-shadow:0.6px 0.9px 1.2px rgba(0,0,0,0.5);">X</div><div class="t" style="right:1081.5px;top:203.00px;font-size:9px;color:#e8e8e8;text-shadow:0.6px 0.9px 1.2px rgba(0,0,0,0.5);">0.34 m</div><div class="t" style="left:807px;top:217.00px;font-size:9px;color:#e8e8e8;text-shadow:0.6px 0.9px 1.2px rgba(0,0,0,0.5);">Y</div><div class="t" style="right:1081.5px;top:217.00px;font-size:9px;color:#e8e8e8;text-shadow:0.6px 0.9px 1.2px rgba(0,0,0,0.5);">0 m</div><div class="t" style="left:807px;top:231.00px;font-size:9px;color:#e8e8e8;text-shadow:0.6px 0.9px 1.2px rgba(0,0,0,0.5);">Z</div><div class="t" style="right:1081.5px;top:231.00px;font-size:9px;color:#e8e8e8;text-shadow:0.6px 0.9px 1.2px rgba(0,0,0,0.5);">0 m</div><div class="t" style="left:798.5px;top:248.00px;font-size:9px;color:#e8e8e8;text-shadow:0.6px 0.9px 1.2px rgba(0,0,0,0.5);">Rotation:</div><div class="r" style="left:797px;top:262px;width:87px;height:42.5px;background:#585858;border-radius:3px;"></div><div class="r" style="left:797px;top:275.6666666666667px;width:87px;height:1px;background:rgba(40,40,40,0.9);border-radius:0px;"></div><div class="r" style="left:797px;top:289.8333333333333px;width:87px;height:1px;background:rgba(40,40,40,0.9);border-radius:0px;"></div><div class="t" style="left:807px;top:264.00px;font-size:9px;color:#e8e8e8;text-shadow:0.6px 0.9px 1.2px rgba(0,0,0,0.5);">X</div><div class="t" style="right:1081.5px;top:264.00px;font-size:9px;color:#e8e8e8;text-shadow:0.6px 0.9px 1.2px rgba(0,0,0,0.5);">0°</div><div class="t" style="left:807px;top:278.00px;font-size:9px;color:#e8e8e8;text-shadow:0.6px 0.9px 1.2px rgba(0,0,0,0.5);">Y</div><div class="t" style="right:1081.5px;top:278.00px;font-size:9px;color:#e8e8e8;text-shadow:0.6px 0.9px 1.2px rgba(0,0,0,0.5);">90°</div><div class="t" style="left:807px;top:292.00px;font-size:9px;color:#e8e8e8;text-shadow:0.6px 0.9px 1.2px rgba(0,0,0,0.5);">Z</div><div class="t" style="right:1081.5px;top:292.00px;font-size:9px;color:#e8e8e8;text-shadow:0.6px 0.9px 1.2px rgba(0,0,0,0.5);">0°</div><div class="t" style="left:798.5px;top:309.00px;font-size:9px;color:#e8e8e8;text-shadow:0.6px 0.9px 1.2px rgba(0,0,0,0.5);">Scale:</div><div class="r" style="left:797px;top:323px;width:87px;height:42.5px;background:#585858;border-radius:3px;"></div><div class="r" style="left:797px;top:336.6666666666667px;width:87px;height:1px;background:rgba(40,40,40,0.9);border-radius:0px;"></div><div class="r" style="left:797px;top:350.8333333333333px;width:87px;height:1px;background:rgba(40,40,40,0.9);border-radius:0px;"></div><div class="t" style="left:807px;top:325.00px;font-size:9px;color:#e8e8e8;text-shadow:0.6px 0.9px 1.2px rgba(0,0,0,0.5);">X</div><div class="t" style="right:1081.5px;top:325.00px;font-size:9px;color:#e8e8e8;text-shadow:0.6px 0.9px 1.2px rgba(0,0,0,0.5);">0.800</div><div class="t" style="left:807px;top:339.00px;font-size:9px;color:#e8e8e8;text-shadow:0.6px 0.9px 1.2px rgba(0,0,0,0.5);">Y</div><div class="t" style="right:1081.5px;top:339.00px;font-size:9px;color:#e8e8e8;text-shadow:0.6px 0.9px 1.2px rgba(0,0,0,0.5);">0.800</div><div class="t" style="left:807px;top:353.00px;font-size:9px;color:#e8e8e8;text-shadow:0.6px 0.9px 1.2px rgba(0,0,0,0.5);">Z</div><div class="t" style="right:1081.5px;top:353.00px;font-size:9px;color:#e8e8e8;text-shadow:0.6px 0.9px 1.2px rgba(0,0,0,0.5);">2.000</div><div class="r" style="left:938px;top:36px;width:178px;height:234px;border-radius:2.5px;background:rgba(70,70,70,0.76);box-shadow:0 2px 9px 2px rgba(0,0,0,0.6);"></div><div class="r" style="left:938px;top:36px;width:178px;height:14.8px;border-radius:2.5px 2.5px 0 0;background:rgba(111,89,176,0.93);"></div><div class="r" style="left:938px;top:50.8px;width:178px;height:1px;background:rgba(0,0,0,0.12);"></div><svg class="r" style="left:945.2px;top:41.3px" width="6" height="6"><path d="M0.4 0.6 L5.2 0.6 L2.8 4.6 Z" fill="#d6d6d6"/></svg><div class="t" style="left:954.3px;top:38.00px;font-size:9px;color:#e8e8e8;text-shadow:0.6px 0.9px 1.2px rgba(0,0,0,0.5);">Vector Curves</div><div class="t" style="right:852px;top:56.00px;font-size:9px;color:#e8e8e8;text-shadow:0.6px 0.9px 1.2px rgba(0,0,0,0.5);">Vector</div><div class="r" style="left:946px;top:77px;width:42px;height:13px;background:#585858;border-radius:3.5px;"></div><div class="r" style="left:946px;top:77px;width:13px;height:13px;background:#547ec2;border-radius:3.5px 0 0 3.5px"></div><div class="r" style="left:959px;top:77px;width:1px;height:13px;background:rgba(40,40,40,0.8);border-radius:0px;"></div><div class="r" style="left:973px;top:77px;width:1px;height:13px;background:rgba(40,40,40,0.8);border-radius:0px;"></div><div class="t" style="left:852.2px;width:200px;text-align:center;top:78.00px;font-size:9px;color:#e8e8e8;text-shadow:0.6px 0.9px 1.2px rgba(0,0,0,0.5);">X</div><div class="t" style="left:865.8px;width:200px;text-align:center;top:78.00px;font-size:9px;color:#e8e8e8;text-shadow:0.6px 0.9px 1.2px rgba(0,0,0,0.5);">Y</div><div class="t" style="left:880.8px;width:200px;text-align:center;top:78.00px;font-size:9px;color:#e8e8e8;text-shadow:0.6px 0.9px 1.2px rgba(0,0,0,0.5);">Z</div><svg class="r" style="left:1030px;top:76px" width="80" height="16"><circle cx="12.9" cy="6.9" r="4.6" stroke="#cfcfcf" stroke-width="1" fill="none"/><path d="M9.6 10.2 L7.2 12.6" stroke="#cfcfcf" stroke-width="1.2" stroke-linecap="round"/><path d="M12.9 4.7 V9.1 M10.7 6.9 H15.1" stroke="#9a9a9a" stroke-width="1.2"/><circle cx="26.8" cy="6.9" r="4.6" stroke="#cfcfcf" stroke-width="1" fill="none"/><path d="M23.5 10.2 L21.1 12.6" stroke="#cfcfcf" stroke-width="1.2" stroke-linecap="round"/><path d="M24.6 6.9 H29" stroke="#9a9a9a" stroke-width="1.3"/><path d="M37.2 6.4 L40.4 9.6 L43.6 6.4" stroke="#cfcfcf" stroke-width="1" fill="none"/><rect x="50.6" y="2.5" width="10" height="10" fill="rgba(0,0,0,0.06)" stroke="rgba(255,255,255,0.1)" stroke-width="1"/><circle cx="55.5" cy="7.3" r="3.1" fill="#a2a2a2"/><path d="M68.3 4.3 L74 10 M74 4.3 L68.3 10" stroke="#cfcfcf" stroke-width="1"/></svg><svg class="r" style="left:951px;top:95px" width="153" height="117.6"><rect x="0" y="0" width="153" height="117.6" fill="#565656"/><rect x="18.62" y="0" width="1" height="117.6" fill="#6a6a6a"/><rect x="0" y="14.20" width="153" height="1" fill="#6a6a6a"/><rect x="37.75" y="0" width="1" height="117.6" fill="#6a6a6a"/><rect x="0" y="28.90" width="153" height="1" fill="#6a6a6a"/><rect x="56.88" y="0" width="1" height="117.6" fill="#6a6a6a"/><rect x="0" y="43.60" width="153" height="1" fill="#6a6a6a"/><rect x="76.00" y="0" width="1" height="117.6" fill="#8a8a8a"/><rect x="0" y="58.30" width="153" height="1" fill="#8a8a8a"/><rect x="95.12" y="0" width="1" height="117.6" fill="#6a6a6a"/><rect x="0" y="73.00" width="153" height="1" fill="#6a6a6a"/><rect x="114.25" y="0" width="1" height="117.6" fill="#6a6a6a"/><rect x="0" y="87.70" width="153" height="1" fill="#6a6a6a"/><rect x="133.38" y="0" width="1" height="117.6" fill="#6a6a6a"/><rect x="0" y="102.40" width="153" height="1" fill="#6a6a6a"/><path d="M0.00,117.60 L3.83,116.10 L7.65,114.55 L11.47,112.96 L15.30,111.31 L19.12,109.61 L22.95,107.86 L26.77,106.05 L30.60,104.19 L34.43,102.26 L38.25,100.28 L42.08,98.23 L45.90,96.11 L49.73,93.93 L53.55,91.68 L57.38,89.36 L61.20,86.97 L65.02,84.49 L68.85,81.94 L72.67,79.31 L76.50,76.60 L80.33,73.80 L84.15,70.91 L87.97,67.93 L91.80,64.85 L95.62,61.68 L99.45,58.41 L103.28,55.03 L107.10,51.54 L110.92,47.95 L114.75,44.24 L118.58,40.41 L122.40,36.46 L126.22,32.38 L130.05,28.18 L133.88,23.84 L137.70,19.37 L141.53,14.75 L145.35,9.99 L149.17,5.07 L153.00,0.00 L153,117.6 L0,117.6 Z" fill="rgba(25,25,25,0.33)"/><path d="M0.00,117.60 L3.83,116.10 L7.65,114.55 L11.47,112.96 L15.30,111.31 L19.12,109.61 L22.95,107.86 L26.77,106.05 L30.60,104.19 L34.43,102.26 L38.25,100.28 L42.08,98.23 L45.90,96.11 L49.73,93.93 L53.55,91.68 L57.38,89.36 L61.20,86.97 L65.02,84.49 L68.85,81.94 L72.67,79.31 L76.50,76.60 L80.33,73.80 L84.15,70.91 L87.97,67.93 L91.80,64.85 L95.62,61.68 L99.45,58.41 L103.28,55.03 L107.10,51.54 L110.92,47.95 L114.75,44.24 L118.58,40.41 L122.40,36.46 L126.22,32.38 L130.05,28.18 L133.88,23.84 L137.70,19.37 L141.53,14.75 L145.35,9.99 L149.17,5.07 L153.00,0.00" stroke="#333333" stroke-width="0.9" fill="none"/><rect x="0.5" y="0.5" width="152" height="116.6" fill="none" stroke="#6e6e6e" stroke-width="1"/><rect x="84.80" y="67.00" width="3.2" height="3.2" fill="#ffffff"/><rect x="0.3" y="115.30" width="2" height="2" fill="#d0d0d0"/><rect x="150.70" y="0.3" width="2" height="2" fill="#d0d0d0"/></svg><div class="r" style="left:946px;top:218px;width:162px;height:12.8px;background:#585858;border-radius:3px;"></div><div class="r" style="left:1026px;top:218px;width:1px;height:12.8px;background:rgba(0,0,0,0.25);border-radius:0px;"></div><div class="t" style="right:940px;top:220.00px;font-size:9px;color:#e8e8e8;text-shadow:0.6px 0.9px 1.2px rgba(0,0,0,0.5);">X 0.13768</div><div class="t" style="right:858px;top:220.00px;font-size:9px;color:#e8e8e8;text-shadow:0.6px 0.9px 1.2px rgba(0,0,0,0.5);">Y -0.16000</div><div class="r" style="left:946px;top:237px;width:162px;height:13px;background:#585858;border-radius:3px;"></div><div class="r" style="left:946px;top:237px;width:162.00px;height:13px;background:#547ec2;border-radius:3px;"></div><div class="t" style="left:952.5px;top:238.00px;font-size:9px;color:#e8e8e8;text-shadow:0.6px 0.9px 1.2px rgba(0,0,0,0.5);">Fac</div><div class="t" style="right:854px;top:238.00px;font-size:9px;color:#e8e8e8;text-shadow:0.6px 0.9px 1.2px rgba(0,0,0,0.5);">1.000</div><div class="t" style="left:947px;top:254.00px;font-size:9px;color:#e8e8e8;text-shadow:0.6px 0.9px 1.2px rgba(0,0,0,0.5);">Vector</div><div class="r" style="left:1146px;top:229px;width:104px;height:126px;border-radius:2.5px;background:rgba(70,70,70,0.76);box-shadow:0 2px 9px 2px rgba(0,0,0,0.6);"></div><div class="r" style="left:1146px;top:229px;width:104px;height:14.8px;border-radius:2.5px 2.5px 0 0;background:rgba(145,126,46,0.93);"></div><div class="r" style="left:1146px;top:243.8px;width:104px;height:1px;background:rgba(0,0,0,0.12);"></div><svg class="r" style="left:1153.2px;top:234.3px" width="6" height="6"><path d="M0.4 0.6 L5.2 0.6 L2.8 4.6 Z" fill="#d6d6d6"/></svg><div class="t" style="left:1162.3px;top:231.00px;font-size:9px;color:#e8e8e8;text-shadow:0.6px 0.9px 1.2px rgba(0,0,0,0.5);">Overlay</div><div class="t" style="right:718px;top:250.00px;font-size:9px;color:#e8e8e8;text-shadow:0.6px 0.9px 1.2px rgba(0,0,0,0.5);">Color</div><div class="r" style="left:1154px;top:271px;width:88px;height:12.8px;background:#2c2c2c;border-radius:3.5px;"></div><div class="t" style="left:1158px;top:272.00px;font-size:9px;color:#e8e8e8;text-shadow:0.6px 0.9px 1.2px rgba(0,0,0,0.5);">Overlay</div><svg class="r" style="left:1234.5px;top:275.2px" width="7" height="5"><path d="M1.2 1.3 L3.5 3.5 L5.8 1.3" stroke="#d0d0d0" stroke-width="1.1" fill="none"/></svg><div class="r" style="left:1154px;top:289px;width:9px;height:9px;background:#5d5d5d;border-radius:1.5px;"></div><div class="t" style="left:1165px;top:289.00px;font-size:9px;color:#e8e8e8;text-shadow:0.6px 0.9px 1.2px rgba(0,0,0,0.5);">Clamp</div><div class="r" style="left:1154px;top:305px;width:88px;height:12.8px;background:#585858;border-radius:3px;"></div><div class="r" style="left:1154px;top:305px;width:40.04px;height:12.8px;background:#547ec2;border-radius:3px 0 0 3px;"></div><div class="t" style="left:1160.5px;top:306.00px;font-size:9px;color:#e8e8e8;text-shadow:0.6px 0.9px 1.2px rgba(0,0,0,0.5);">Fac</div><div class="t" style="right:720px;top:306.00px;font-size:9px;color:#e8e8e8;text-shadow:0.6px 0.9px 1.2px rgba(0,0,0,0.5);">0.467</div><div class="t" style="left:1155px;top:323.00px;font-size:9px;color:#e8e8e8;text-shadow:0.6px 0.9px 1.2px rgba(0,0,0,0.5);">Color1</div><div class="t" style="left:1155px;top:339.00px;font-size:9px;color:#e8e8e8;text-shadow:0.6px 0.9px 1.2px rgba(0,0,0,0.5);">Color2</div><div class="r" style="left:1280px;top:170px;width:105px;height:93px;border-radius:2.5px;background:rgba(70,70,70,0.76);box-shadow:0 2px 9px 2px rgba(0,0,0,0.6);"></div><div class="r" style="left:1280px;top:170px;width:105px;height:14.8px;border-radius:2.5px 2.5px 0 0;background:rgba(166,98,58,0.93);"></div><div class="r" style="left:1280px;top:184.8px;width:105px;height:1px;background:rgba(0,0,0,0.12);"></div><svg class="r" style="left:1287.2px;top:175.3px" width="6" height="6"><path d="M0.4 0.6 L5.2 0.6 L2.8 4.6 Z" fill="#d6d6d6"/></svg><div class="t" style="left:1296.3px;top:172.00px;font-size:9px;color:#e8e8e8;text-shadow:0.6px 0.9px 1.2px rgba(0,0,0,0.5);">Gradient Texture</div><div class="t" style="right:583px;top:190.00px;font-size:9px;color:#e8e8e8;text-shadow:0.6px 0.9px 1.2px rgba(0,0,0,0.5);">Color</div><div class="t" style="right:583px;top:207.00px;font-size:9px;color:#e8e8e8;text-shadow:0.6px 0.9px 1.2px rgba(0,0,0,0.5);">Fac</div><div class="r" style="left:1288px;top:227px;width:88px;height:12.8px;background:#2c2c2c;border-radius:3.5px;"></div><div class="t" style="left:1292px;top:228.00px;font-size:9px;color:#e8e8e8;text-shadow:0.6px 0.9px 1.2px rgba(0,0,0,0.5);">Spherical</div><svg class="r" style="left:1368.5px;top:231.20000000000002px" width="7" height="5"><path d="M1.2 1.3 L3.5 3.5 L5.8 1.3" stroke="#d0d0d0" stroke-width="1.1" fill="none"/></svg><div class="t" style="left:1289px;top:247.00px;font-size:9px;color:#e8e8e8;text-shadow:0.6px 0.9px 1.2px rgba(0,0,0,0.5);">Vector</div><div class="r" style="left:1414px;top:155px;width:179px;height:156px;border-radius:2.5px;background:rgba(70,70,70,0.76);box-shadow:0 2px 9px 2px rgba(0,0,0,0.6);"></div><div class="r" style="left:1414px;top:155px;width:179px;height:14.8px;border-radius:2.5px 2.5px 0 0;background:rgba(74,141,181,0.93);"></div><div class="r" style="left:1414px;top:169.8px;width:179px;height:1px;background:rgba(0,0,0,0.12);"></div><svg class="r" style="left:1421.2px;top:160.3px" width="6" height="6"><path d="M0.4 0.6 L5.2 0.6 L2.8 4.6 Z" fill="#d6d6d6"/></svg><div class="t" style="left:1430.3px;top:157.00px;font-size:9px;color:#e8e8e8;text-shadow:0.6px 0.9px 1.2px rgba(0,0,0,0.5);">ColorRamp</div><div class="t" style="right:375px;top:175.00px;font-size:9px;color:#e8e8e8;text-shadow:0.6px 0.9px 1.2px rgba(0,0,0,0.5);">Color</div><div class="t" style="right:375px;top:191.00px;font-size:9px;color:#e8e8e8;text-shadow:0.6px 0.9px 1.2px rgba(0,0,0,0.5);">Alpha</div><svg class="r" style="left:1425px;top:217.4px" width="60" height="10"><path d="M4.5 2 V8 M1.5 5 H7.5" stroke="#bdbdbd" stroke-width="1"/><path d="M19.5 5 H25.5" stroke="#bdbdbd" stroke-width="1"/><path d="M43.2 3.6 L46 6.4 L48.8 3.6" stroke="#bdbdbd" stroke-width="1" fill="none"/></svg><div class="r" style="left:1492px;top:216px;width:93px;height:12.6px;background:#2c2c2c;border-radius:3.5px;"></div><div class="r" style="left:1537.4px;top:216px;width:1px;height:12.6px;background:rgba(70,70,70,0.9);border-radius:0px;"></div><div class="t" style="left:1496.3px;top:218.00px;font-size:9px;color:#e8e8e8;text-shadow:0.6px 0.9px 1.2px rgba(0,0,0,0.5);">RGB</div><svg class="r" style="left:1530.1000000000001px;top:220.0px" width="7" height="5"><path d="M1.2 1.3 L3.5 3.5 L5.8 1.3" stroke="#d0d0d0" stroke-width="1.1" fill="none"/></svg><div class="t" style="left:1542.4px;top:218.00px;font-size:9px;color:#e8e8e8;text-shadow:0.6px 0.9px 1.2px rgba(0,0,0,0.5);">Linear</div><svg class="r" style="left:1577.7px;top:220.0px" width="7" height="5"><path d="M1.2 1.3 L3.5 3.5 L5.8 1.3" stroke="#d0d0d0" stroke-width="1.1" fill="none"/></svg><div class="r" style="left:1428.3px;top:232.4px;width:150.6px;height:15.2px;background:#000;"></div><div class="r" style="left:1429.3px;top:233.4px;width:148.6px;height:13.399999999999999px;background:linear-gradient(to right,rgb(0,0,0) 0%,rgb(0,0,0) 0.00%,rgb(73,73,73) 4.42%,rgb(99,99,99) 8.83%,rgb(119,119,119) 13.25%,rgb(136,136,136) 17.67%,rgb(151,151,151) 22.08%,rgb(164,164,164) 26.50%,rgb(176,176,176) 30.92%,rgb(187,187,187) 35.33%,rgb(197,197,197) 39.75%,rgb(207,207,207) 44.17%,rgb(216,216,216) 48.58%,rgb(224,224,224) 53.00%,rgb(224,224,224) 100%);"></div><div class="r" style="left:1428.3px;top:247.6px;width:150.6px;height:0.8px;background:rgba(150,150,150,0.6);"></div><div class="r" style="left:1428.70px;top:233.4px;width:1.2px;height:7.30px;background:repeating-linear-gradient(to bottom,#fff 0 1.8px,#000 1.8px 3px);"></div><svg class="r" style="left:1424.50px;top:240.40px" width="9.6" height="10.00" viewBox="0 0 9.6 10.00"><path d="M0.8 9.20 V3.9 L4.8 0.8 L8.8 3.9 V9.20 Z" fill="#9a9a9a" stroke="#000" stroke-width="1.2" stroke-linejoin="miter"/><path d="M1.4 4.2 L4.8 1.5 L8.2 4.2 Z" fill="#e4e4e4"/><rect x="2" y="5.00" width="5.6" height="3.8" fill="#000" stroke="#c8c8c8" stroke-width="0.6"/></svg><svg class="r" style="left:1503.26px;top:239.40px" width="9.6" height="11.00" viewBox="0 0 9.6 11.00"><path d="M0.8 10.20 V3.9 L4.8 0.8 L8.8 3.9 V10.20 Z" fill="#9a9a9a" stroke="#000" stroke-width="1.2" stroke-linejoin="miter"/><path d="M1.4 4.2 L4.8 1.5 L8.2 4.2 Z" fill="#e4e4e4"/><rect x="2" y="6.00" width="5.6" height="3.8" fill="#dcdcdc" stroke="#c8c8c8" stroke-width="0.6"/></svg><div class="r" style="left:1423px;top:257px;width:45px;height:12.5px;background:#585858;border-radius:3px;"></div><div class="t" style="left:1344.8px;width:200px;text-align:center;top:258.00px;font-size:9px;color:#e8e8e8;text-shadow:0.6px 0.9px 1.2px rgba(0,0,0,0.5);">0</div><div class="r" style="left:1476px;top:257px;width:109px;height:12.5px;background:#585858;border-radius:3px;"></div><div class="t" style="left:1486px;top:258.00px;font-size:9px;color:#e8e8e8;text-shadow:0.6px 0.9px 1.2px rgba(0,0,0,0.5);">Pos</div><div class="t" style="right:380px;top:258.00px;font-size:9px;color:#e8e8e8;text-shadow:0.6px 0.9px 1.2px rgba(0,0,0,0.5);">0.000</div><div class="r" style="left:1423px;top:275px;width:162px;height:13px;background:#000000;border-radius:3.5px;"></div><div class="t" style="left:1423px;top:294.00px;font-size:9px;color:#e8e8e8;text-shadow:0.6px 0.9px 1.2px rgba(0,0,0,0.5);">Fac</div><div class="r" style="left:1623px;top:155px;width:179px;height:232px;border-radius:2.5px;background:rgba(70,70,70,0.76);box-shadow:0 2px 9px 2px rgba(0,0,0,0.6);"></div><div class="r" style="left:1623px;top:155px;width:179px;height:14.8px;border-radius:2.5px 2.5px 0 0;background:rgba(44,144,97,0.93);"></div><div class="r" style="left:1623px;top:169.8px;width:179px;height:1px;background:rgba(0,0,0,0.12);"></div><svg class="r" style="left:1630.2px;top:160.3px" width="6" height="6"><path d="M0.4 0.6 L5.2 0.6 L2.8 4.6 Z" fill="#d6d6d6"/></svg><div class="t" style="left:1639.3px;top:157.00px;font-size:9px;color:#e8e8e8;text-shadow:0.6px 0.9px 1.2px rgba(0,0,0,0.5);">Principled Volume</div><div class="t" style="right:166px;top:175.00px;font-size:9px;color:#e8e8e8;text-shadow:0.6px 0.9px 1.2px rgba(0,0,0,0.5);">Volume</div><div class="t" style="left:1632px;top:194.00px;font-size:9px;color:#e8e8e8;text-shadow:0.6px 0.9px 1.2px rgba(0,0,0,0.5);">Color</div><div class="r" style="left:1716px;top:193.2px;width:77px;height:12.6px;background:#bcbcbc;border-radius:4px;"></div><div class="t" style="left:1632px;top:210.00px;font-size:9px;color:#e8e8e8;text-shadow:0.6px 0.9px 1.2px rgba(0,0,0,0.5);">Color Attribute</div><div class="r" style="left:1716px;top:209.3px;width:77px;height:12.6px;background:#1e1e1e;border-radius:4px;"></div><div class="t" style="left:1632px;top:226.00px;font-size:9px;color:#e8e8e8;text-shadow:0.6px 0.9px 1.2px rgba(0,0,0,0.5);">Density</div><div class="t" style="left:1632px;top:242.00px;font-size:9px;color:#e8e8e8;text-shadow:0.6px 0.9px 1.2px rgba(0,0,0,0.5);">Density Attribute</div><div class="r" style="left:1716px;top:241.2px;width:77px;height:12.6px;background:#1e1e1e;border-radius:4px;"></div><div class="t" style="left:1720px;top:243.00px;font-size:9px;color:#e8e8e8;text-shadow:0.6px 0.9px 1.2px rgba(0,0,0,0.5);">density</div><div class="r" style="left:1631px;top:257px;width:162px;height:12.8px;background:#585858;border-radius:3px;"></div><div class="r" style="left:1631px;top:257px;width:80.19px;height:12.8px;background:#547ec2;border-radius:3px 0 0 3px;"></div><div class="t" style="left:1637px;top:258.00px;font-size:9px;color:#e8e8e8;text-shadow:0.6px 0.9px 1.2px rgba(0,0,0,0.5);">Anisotropy</div><div class="t" style="right:169px;top:258.00px;font-size:9px;color:#e8e8e8;text-shadow:0.6px 0.9px 1.2px rgba(0,0,0,0.5);">0.000</div><div class="t" style="left:1632px;top:274.00px;font-size:9px;color:#e8e8e8;text-shadow:0.6px 0.9px 1.2px rgba(0,0,0,0.5);">Absorption Color</div><div class="r" style="left:1716px;top:273.2px;width:77px;height:12.6px;background:#000000;border-radius:4px;"></div><div class="r" style="left:1631px;top:289.2px;width:162px;height:12.6px;background:#585858;border-radius:3px;"></div><div class="t" style="left:1641.5px;top:290.00px;font-size:9px;color:#e8e8e8;text-shadow:0.6px 0.9px 1.2px rgba(0,0,0,0.5);">Emission Strength</div><div class="t" style="right:173px;top:290.00px;font-size:9px;color:#e8e8e8;text-shadow:0.6px 0.9px 1.2px rgba(0,0,0,0.5);">0.000</div><div class="t" style="left:1632px;top:306.00px;font-size:9px;color:#e8e8e8;text-shadow:0.6px 0.9px 1.2px rgba(0,0,0,0.5);">Emission Color</div><div class="r" style="left:1716px;top:305.3px;width:77px;height:12.6px;background:#ffffff;border-radius:4px;"></div><div class="r" style="left:1631px;top:321.6px;width:162px;height:12.6px;background:#585858;border-radius:3px;"></div><div class="t" style="left:1637.3px;top:323.00px;font-size:9px;color:#e8e8e8;text-shadow:0.6px 0.9px 1.2px rgba(0,0,0,0.5);">Blackbody Intensity</div><div class="t" style="right:169px;top:323.00px;font-size:9px;color:#e8e8e8;text-shadow:0.6px 0.9px 1.2px rgba(0,0,0,0.5);">0.000</div><div class="t" style="left:1632px;top:339.00px;font-size:9px;color:#e8e8e8;text-shadow:0.6px 0.9px 1.2px rgba(0,0,0,0.5);">Blackbody Tint</div><div class="r" style="left:1716px;top:337.8px;width:77px;height:12.6px;background:#ffffff;border-radius:4px;"></div><div class="r" style="left:1631px;top:353.9px;width:162px;height:12.6px;background:#585858;border-radius:3px;"></div><div class="t" style="left:1641.5px;top:355.00px;font-size:9px;color:#e8e8e8;text-shadow:0.6px 0.9px 1.2px rgba(0,0,0,0.5);">Temperature</div><div class="t" style="right:173px;top:355.00px;font-size:9px;color:#e8e8e8;text-shadow:0.6px 0.9px 1.2px rgba(0,0,0,0.5);">3000.000</div><div class="t" style="left:1632px;top:371.00px;font-size:9px;color:#e8e8e8;text-shadow:0.6px 0.9px 1.2px rgba(0,0,0,0.5);">Temperature Attri…</div><div class="r" style="left:1716px;top:370.1px;width:77px;height:12.6px;background:#1e1e1e;border-radius:4px;"></div><div class="t" style="left:1720.4px;top:372.00px;font-size:9px;color:#e8e8e8;text-shadow:0.6px 0.9px 1.2px rgba(0,0,0,0.5);">temperature</div><div class="r" style="left:1832px;top:155px;width:104px;height:87px;border-radius:2.5px;background:rgba(70,70,70,0.76);box-shadow:0 2px 9px 2px rgba(0,0,0,0.6);"></div><div class="r" style="left:1832px;top:155px;width:104px;height:14.8px;border-radius:2.5px 2.5px 0 0;background:rgba(134,40,48,0.93);"></div><div class="r" style="left:1832px;top:169.8px;width:104px;height:1px;background:rgba(0,0,0,0.12);"></div><svg class="r" style="left:1839.2px;top:160.3px" width="6" height="6"><path d="M0.4 0.6 L5.2 0.6 L2.8 4.6 Z" fill="#d6d6d6"/></svg><div class="t" style="left:1848.3px;top:157.00px;font-size:9px;color:#e8e8e8;text-shadow:0.6px 0.9px 1.2px rgba(0,0,0,0.5);">Material Output</div><div class="r" style="left:1840px;top:174px;width:88px;height:12.8px;background:#2c2c2c;border-radius:3.5px;"></div><div class="t" style="left:1844px;top:175.00px;font-size:9px;color:#e8e8e8;text-shadow:0.6px 0.9px 1.2px rgba(0,0,0,0.5);">All</div><svg class="r" style="left:1920.5px;top:178.20000000000002px" width="7" height="5"><path d="M1.2 1.3 L3.5 3.5 L5.8 1.3" stroke="#d0d0d0" stroke-width="1.1" fill="none"/></svg><div class="t" style="left:1841px;top:194.00px;font-size:9px;color:#e8e8e8;text-shadow:0.6px 0.9px 1.2px rgba(0,0,0,0.5);">Surface</div><div class="t" style="left:1841px;top:210.00px;font-size:9px;color:#e8e8e8;text-shadow:0.6px 0.9px 1.2px rgba(0,0,0,0.5);">Volume</div><div class="t" style="left:1841px;top:226.00px;font-size:9px;color:#e8e8e8;text-shadow:0.6px 0.9px 1.2px rgba(0,0,0,0.5);">Displacement</div>
</div>
<svg class="r" style="left:0;top:0" width="1955" height="763"><circle cx="151.4" cy="284.7" r="3.2" fill="#6363c7" stroke="rgba(0,0,0,0.8)" stroke-width="0.9"/><circle cx="151.4" cy="300.7" r="3.2" fill="#6363c7" stroke="rgba(0,0,0,0.8)" stroke-width="0.9"/><circle cx="151.4" cy="316.7" r="3.2" fill="#6363c7" stroke="rgba(0,0,0,0.8)" stroke-width="0.9"/><circle cx="151.4" cy="332.7" r="3.2" fill="#6363c7" stroke="rgba(0,0,0,0.8)" stroke-width="0.9"/><circle cx="151.4" cy="348.7" r="3.2" fill="#6363c7" stroke="rgba(0,0,0,0.8)" stroke-width="0.9"/><circle cx="151.4" cy="364.7" r="3.2" fill="#6363c7" stroke="rgba(0,0,0,0.8)" stroke-width="0.9"/><circle cx="151.4" cy="380.7" r="3.2" fill="#6363c7" stroke="rgba(0,0,0,0.8)" stroke-width="0.9"/><circle cx="416.4" cy="612.5" r="3.2" fill="#a1a1a1" stroke="rgba(0,0,0,0.8)" stroke-width="0.9"/><circle cx="416.4" cy="628.7" r="3.2" fill="#c7c729" stroke="rgba(0,0,0,0.8)" stroke-width="0.9"/><circle cx="312" cy="669" r="3.2" fill="#6363c7" stroke="rgba(0,0,0,0.8)" stroke-width="0.9"/><circle cx="312" cy="685" r="3.2" fill="#a1a1a1" stroke="rgba(0,0,0,0.8)" stroke-width="0.9"/><circle cx="312" cy="701" r="3.2" fill="#a1a1a1" stroke="rgba(0,0,0,0.8)" stroke-width="0.9"/><circle cx="312" cy="717" r="3.2" fill="#a1a1a1" stroke="rgba(0,0,0,0.8)" stroke-width="0.9"/><circle cx="312" cy="733" r="3.2" fill="#a1a1a1" stroke="rgba(0,0,0,0.8)" stroke-width="0.9"/><circle cx="580.4" cy="612.5" r="3.2" fill="#c7c729" stroke="rgba(0,0,0,0.8)" stroke-width="0.9"/><circle cx="476" cy="669" r="3.2" fill="#a1a1a1" stroke="rgba(0,0,0,0.8)" stroke-width="0.9"/><circle cx="476" cy="685" r="3.2" fill="#c7c729" stroke="rgba(0,0,0,0.8)" stroke-width="0.9"/><circle cx="476" cy="701" r="3.2" fill="#c7c729" stroke="rgba(0,0,0,0.8)" stroke-width="0.9"/><circle cx="729.4" cy="553.2" r="3.2" fill="#a1a1a1" stroke="rgba(0,0,0,0.8)" stroke-width="0.9"/><circle cx="729.4" cy="569.1" r="3.2" fill="#c7c729" stroke="rgba(0,0,0,0.8)" stroke-width="0.9"/><circle cx="729.4" cy="585.0" r="3.2" fill="#6363c7" stroke="rgba(0,0,0,0.8)" stroke-width="0.9"/><circle cx="625" cy="663.7" r="3.2" fill="#6363c7" stroke="rgba(0,0,0,0.8)" stroke-width="0.9"/><circle cx="625" cy="680" r="3.2" fill="#a1a1a1" stroke="rgba(0,0,0,0.8)" stroke-width="0.9"/><circle cx="625" cy="696" r="3.2" fill="#a1a1a1" stroke="rgba(0,0,0,0.8)" stroke-width="0.9"/><circle cx="967.4" cy="434.2" r="3.2" fill="#c7c729" stroke="rgba(0,0,0,0.8)" stroke-width="0.9"/><circle cx="967.4" cy="450.2" r="3.2" fill="#a1a1a1" stroke="rgba(0,0,0,0.8)" stroke-width="0.9"/><circle cx="789" cy="552.8" r="3.2" fill="#a1a1a1" stroke="rgba(0,0,0,0.8)" stroke-width="0.9"/><circle cx="893.4" cy="136.2" r="3.2" fill="#6363c7" stroke="rgba(0,0,0,0.8)" stroke-width="0.9"/><circle cx="789" cy="176.2" r="3.2" fill="#6363c7" stroke="rgba(0,0,0,0.8)" stroke-width="0.9"/><circle cx="789" cy="215" r="3.2" fill="#6363c7" stroke="rgba(0,0,0,0.8)" stroke-width="0.9"/><circle cx="789" cy="275.6" r="3.2" fill="#6363c7" stroke="rgba(0,0,0,0.8)" stroke-width="0.9"/><circle cx="789" cy="336.7" r="3.2" fill="#6363c7" stroke="rgba(0,0,0,0.8)" stroke-width="0.9"/><circle cx="1116.4" cy="61.7" r="3.2" fill="#6363c7" stroke="rgba(0,0,0,0.8)" stroke-width="0.9"/><circle cx="938" cy="243.3" r="3.2" fill="#a1a1a1" stroke="rgba(0,0,0,0.8)" stroke-width="0.9"/><circle cx="938" cy="259" r="3.2" fill="#6363c7" stroke="rgba(0,0,0,0.8)" stroke-width="0.9"/><circle cx="1250.4" cy="255.2" r="3.2" fill="#c7c729" stroke="rgba(0,0,0,0.8)" stroke-width="0.9"/><circle cx="1146" cy="311.5" r="3.2" fill="#a1a1a1" stroke="rgba(0,0,0,0.8)" stroke-width="0.9"/><circle cx="1146" cy="328.3" r="3.2" fill="#c7c729" stroke="rgba(0,0,0,0.8)" stroke-width="0.9"/><circle cx="1146" cy="344.2" r="3.2" fill="#c7c729" stroke="rgba(0,0,0,0.8)" stroke-width="0.9"/><circle cx="1385.4" cy="195.7" r="3.2" fill="#c7c729" stroke="rgba(0,0,0,0.8)" stroke-width="0.9"/><circle cx="1385.4" cy="212.2" r="3.2" fill="#a1a1a1" stroke="rgba(0,0,0,0.8)" stroke-width="0.9"/><circle cx="1280" cy="252.5" r="3.2" fill="#6363c7" stroke="rgba(0,0,0,0.8)" stroke-width="0.9"/><circle cx="1593.4" cy="180.2" r="3.2" fill="#c7c729" stroke="rgba(0,0,0,0.8)" stroke-width="0.9"/><circle cx="1593.4" cy="197.0" r="3.2" fill="#a1a1a1" stroke="rgba(0,0,0,0.8)" stroke-width="0.9"/><circle cx="1414" cy="299.7" r="3.2" fill="#a1a1a1" stroke="rgba(0,0,0,0.8)" stroke-width="0.9"/><circle cx="1802.4" cy="180.89999999999998" r="3.2" fill="#63c763" stroke="rgba(0,0,0,0.8)" stroke-width="0.9"/><circle cx="1623" cy="199.2" r="3.2" fill="#c7c729" stroke="rgba(0,0,0,0.8)" stroke-width="0.9"/><circle cx="1623" cy="215.3" r="3.2" fill="#707070" stroke="rgba(0,0,0,0.8)" stroke-width="0.9"/><circle cx="1623" cy="231.3" r="3.2" fill="#a1a1a1" stroke="rgba(0,0,0,0.8)" stroke-width="0.9"/><circle cx="1623" cy="247.5" r="3.2" fill="#707070" stroke="rgba(0,0,0,0.8)" stroke-width="0.9"/><circle cx="1623" cy="263.2" r="3.2" fill="#a1a1a1" stroke="rgba(0,0,0,0.8)" stroke-width="0.9"/><circle cx="1623" cy="279.6" r="3.2" fill="#c7c729" stroke="rgba(0,0,0,0.8)" stroke-width="0.9"/><circle cx="1623" cy="295.3" r="3.2" fill="#a1a1a1" stroke="rgba(0,0,0,0.8)" stroke-width="0.9"/><circle cx="1623" cy="311.6" r="3.2" fill="#c7c729" stroke="rgba(0,0,0,0.8)" stroke-width="0.9"/><circle cx="1623" cy="328.1" r="3.2" fill="#a1a1a1" stroke="rgba(0,0,0,0.8)" stroke-width="0.9"/><circle cx="1623" cy="344" r="3.2" fill="#c7c729" stroke="rgba(0,0,0,0.8)" stroke-width="0.9"/><circle cx="1623" cy="360.2" r="3.2" fill="#a1a1a1" stroke="rgba(0,0,0,0.8)" stroke-width="0.9"/><circle cx="1623" cy="376.4" r="3.2" fill="#707070" stroke="rgba(0,0,0,0.8)" stroke-width="0.9"/><circle cx="1832" cy="199.3" r="3.2" fill="#63c763" stroke="rgba(0,0,0,0.8)" stroke-width="0.9"/><circle cx="1832" cy="215.6" r="3.2" fill="#63c763" stroke="rgba(0,0,0,0.8)" stroke-width="0.9"/><circle cx="1832" cy="231.7" r="3.2" fill="#6363c7" stroke="rgba(0,0,0,0.8)" stroke-width="0.9"/><circle cx="207.2" cy="184.5" r="3.2" fill="#6363c7" stroke="rgba(0,0,0,0.8)" stroke-width="0.9"/><circle cx="207.4" cy="348.4" r="3.2" fill="#6363c7" stroke="rgba(0,0,0,0.8)" stroke-width="0.9"/><circle cx="445.6" cy="348.4" r="3.2" fill="#6363c7" stroke="rgba(0,0,0,0.8)" stroke-width="0.9"/><circle cx="207.4" cy="661.4" r="3.2" fill="#6363c7" stroke="rgba(0,0,0,0.8)" stroke-width="0.9"/><circle cx="460.4" cy="661.4" r="3.2" fill="#6363c7" stroke="rgba(0,0,0,0.8)" stroke-width="0.9"/><circle cx="445.7" cy="706" r="3.2" fill="#a1a1a1" stroke="rgba(0,0,0,0.8)" stroke-width="0.9"/></svg>
</body></html>
